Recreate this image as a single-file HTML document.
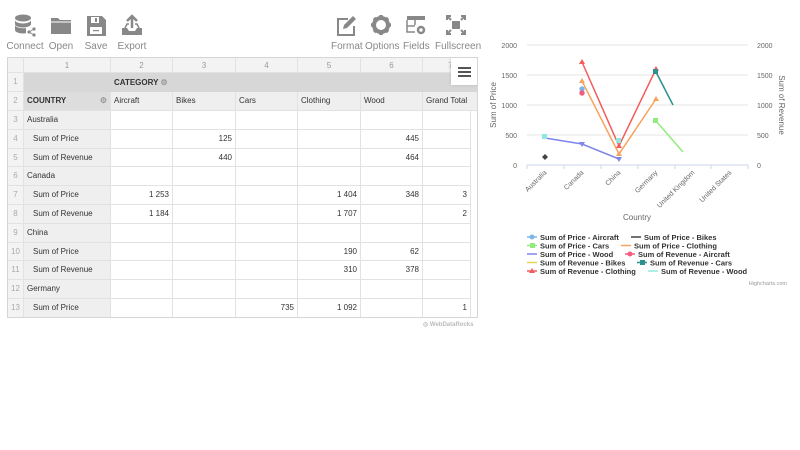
<!DOCTYPE html>
<html><head><meta charset="utf-8"><style>
body{margin:0;width:800px;height:450px;background:#fff;font-family:"Liberation Sans",sans-serif;position:relative;overflow:hidden}
.tb{position:absolute;top:12px;font-size:10px;color:#888;text-align:center;line-height:12px}
.tb svg{display:block;margin:0 auto 3px}
.grid{position:absolute;left:7px;top:57px;width:471px;height:261px;border:1px solid #d5d5d5;box-sizing:border-box;overflow:hidden}
.c{position:absolute;font-size:8px;color:#333;box-sizing:border-box;border-right:1px solid #e2e2e2;border-bottom:1px solid #e2e2e2;line-height:18.8px;white-space:nowrap;overflow:hidden}
.h{background:#f3f3f3;color:#999;text-align:center;line-height:15px}
.rn{background:#f3f3f3;color:#aaa;text-align:center}
.lh{background:#efefef}
.r{text-align:right;padding-right:3px}
</style></head><body>
<div class="tb" style="left:6px;width:38px">
<svg width="24" height="26" viewBox="0 0 24 26"><ellipse cx="10" cy="6" rx="8" ry="3.5" fill="#888"/><path d="M2 8v4c0 2 4 3.5 8 3.5s8-1.5 8-3.5V8c0 2-4 3.5-8 3.5S2 10 2 8zM2 14v4c0 2 4 3.5 8 3.5 1 0 2 0 3-.2V16c-1 .2-2 .3-3 .3-4 0-8-1.5-8-3.5z" fill="#888"/><circle cx="16" cy="20" r="1.6" fill="#888"/><circle cx="21" cy="17" r="1.6" fill="#888"/><circle cx="21" cy="23" r="1.6" fill="#888"/><path d="M16 20l5-3M16 20l5 3" stroke="#888"/></svg>Connect</div>
<div class="tb" style="left:48px;width:26px"><svg width="24" height="26" viewBox="0 0 24 26"><path d="M2 6h7l2 2h11v14H2z" fill="#888"/><path d="M2 10h20" stroke="#fff"/></svg>Open</div>
<div class="tb" style="left:84px;width:24px"><svg width="24" height="26" viewBox="0 0 24 26"><path d="M3 4h15l4 4v16H3z" fill="#888"/><rect x="7" y="5" width="8" height="6" fill="#fff"/><rect x="11" y="6" width="2" height="4" fill="#888"/><rect x="6" y="15" width="12" height="7" fill="#fff"/><rect x="9" y="18" width="6" height="1.2" fill="#888"/></svg>Save</div>
<div class="tb" style="left:117px;width:30px"><svg width="24" height="26" viewBox="0 0 24 26"><path d="M2 16h5l2 3h6l2-3h5v7H2z" fill="#888"/><path d="M12 16V4M7 9l5-5 5 5" stroke="#888" stroke-width="2.5" fill="none"/><path d="M5 16l2-4h2M19 16l-2-4h-2" stroke="#888" stroke-width="1.5" fill="none"/></svg>Export</div>
<div class="tb" style="left:331px;width:29px"><svg width="24" height="26" viewBox="0 0 24 26"><path d="M3 6h11v2H5v14h14v-8h2v10H3z" fill="#888"/><path d="M9 17l1-4 9-9 3 3-9 9z" fill="#888"/></svg>Format</div>
<div class="tb" style="left:365px;width:32px"><svg width="24" height="26" viewBox="0 0 24 26"><circle cx="12" cy="13" r="7" fill="none" stroke="#888" stroke-width="4"/><g stroke="#888" stroke-width="3.5"><path d="M12 3v4M12 19v4M2 13h4M18 13h4M5 6l3 3M16 17l3 3M19 6l-3 3M5 20l3-3"/></g><circle cx="12" cy="13" r="2.5" fill="#fff"/></svg>Options</div>
<div class="tb" style="left:403px;width:26px"><svg width="24" height="26" viewBox="0 0 24 26"><rect x="3" y="4" width="18" height="4" fill="#888"/><path d="M3 8v12h8M3 14h8M11 8v5" stroke="#888" stroke-width="1.5" fill="none"/><circle cx="17" cy="18" r="3" fill="none" stroke="#888" stroke-width="2.5"/></svg>Fields</div>
<div class="tb" style="left:435px;width:42px"><svg width="24" height="26" viewBox="0 0 24 26"><rect x="8" y="9" width="8" height="8" fill="#888"/><g stroke="#888" stroke-width="2" fill="none"><path d="M3 8V4h4M3 4l4 4M21 8V4h-4M21 4l-4 4M3 18v4h4M3 22l4-4M21 18v4h-4M21 22l-4-4"/></g></svg>Fullscreen</div>

<div class="grid">
<div class="c h" style="left:0;top:0;width:16px;height:15px"></div>
<div class="c h" style="left:16px;top:0;width:87px;height:15px">1</div>
<div class="c h" style="left:103px;top:0;width:62px;height:15px">2</div>
<div class="c h" style="left:165px;top:0;width:63px;height:15px">3</div>
<div class="c h" style="left:228px;top:0;width:62px;height:15px">4</div>
<div class="c h" style="left:290px;top:0;width:63px;height:15px">5</div>
<div class="c h" style="left:353px;top:0;width:62px;height:15px">6</div>
<div class="c h" style="left:415px;top:0;width:56px;height:15px">7</div>
<div style="position:absolute;left:443px;top:0;width:27px;height:27px;background:#fff;box-shadow:0 0 3px #bbb;z-index:3"><div style="position:absolute;left:7px;top:9px;width:13px;height:1.5px;background:#555;box-shadow:0 4px 0 #555,0 8px 0 #555"></div></div>
<div class="c rn" style="left:0;top:15px;width:16px;height:19px">1</div>
<div class="c rn" style="left:0;top:34px;width:16px;height:19px">2</div>
<div class="c" style="left:16px;top:15px;width:455px;height:19px;background:#d7d7d7;border:none"></div>
<div class="c" style="left:106px;top:15px;width:200px;height:19px;font-weight:bold;border:none;line-height:19px">CATEGORY <span style="color:#999">⚙</span></div>
<div class="c lh" style="left:16px;top:34px;width:87px;height:19px;background:#ddd;font-weight:bold;padding-left:3px">COUNTRY<span style="position:absolute;right:3px;color:#999">⚙</span></div>
<div class="c lh" style="left:103px;top:34px;width:62px;height:19px;padding-left:3px">Aircraft</div>
<div class="c lh" style="left:165px;top:34px;width:63px;height:19px;padding-left:3px">Bikes</div>
<div class="c lh" style="left:228px;top:34px;width:62px;height:19px;padding-left:3px">Cars</div>
<div class="c lh" style="left:290px;top:34px;width:63px;height:19px;padding-left:3px">Clothing</div>
<div class="c lh" style="left:353px;top:34px;width:62px;height:19px;padding-left:3px">Wood</div>
<div class="c lh" style="left:415px;top:34px;width:56px;height:19px;padding-left:3px">Grand Total</div>
<div id="rows"></div>
</div>
<div style="position:absolute;left:423px;top:321px;font-size:6px;color:#bbb;font-weight:bold">◎ WebDataRocks</div>
<script>
var rows=[["Australia"],["Sum of Price","","125","","","445",""],["Sum of Revenue","","440","","","464",""],["Canada"],["Sum of Price","1 253","","","1 404","348","3"],["Sum of Revenue","1 184","","","1 707","","2"],["China"],["Sum of Price","","","","190","62",""],["Sum of Revenue","","","","310","378",""],["Germany"],["Sum of Price","","","735","1 092","","1"]];
var L=[16,103,165,228,290,353,415],W=[87,62,63,62,63,62,48],h="";
rows.forEach(function(r,i){var t=53+i*18.8;h+='<div class="c rn" style="left:0;top:'+t+'px;width:16px;height:18.8px">'+(i+3)+'</div>';
for(var j=0;j<7;j++){var v=r[j]||"";var cls=j==0?'c lh':'c r';var pad=j==0?(r.length==1?'padding-left:3px;':'padding-left:9px;'):'';
h+='<div class="'+cls+'" style="'+pad+'left:'+L[j]+'px;top:'+t+'px;width:'+W[j]+'px;height:18.8px">'+v+'</div>';}});
document.getElementById('rows').innerHTML=h;
</script>

<svg style="position:absolute;left:0;top:0" width="800" height="450" font-family="Liberation Sans,sans-serif">
<g stroke="#e6e6e6" stroke-width="1"><path d="M527 45H748M527 75H748M527 105H748M527 135H748"/></g>
<path d="M527 165H748" stroke="#ccd6eb"/>
<g stroke="#ccd6eb"><path d="M527 165v4M564 165v4M601 165v4M638 165v4M675 165v4M711 165v4M748 165v4"/></g>
<g font-size="7" fill="#666" text-anchor="end"><text x="517" y="48">2000</text><text x="517" y="108">1000</text><text x="517" y="138">500</text><text x="517" y="168">0</text><text x="517" y="78">1500</text></g>
<g font-size="7" fill="#666"><text x="757" y="48">2000</text><text x="757" y="78">1500</text><text x="757" y="108">1000</text><text x="757" y="138">500</text><text x="757" y="168">0</text></g>
<text font-size="8" fill="#666" transform="translate(496,105) rotate(-90)" text-anchor="middle">Sum of Price</text>
<text font-size="8" fill="#666" transform="translate(779,105) rotate(90)" text-anchor="middle">Sum of Revenue</text>
<g font-size="7" fill="#666" text-anchor="end"><text transform="translate(547,173) rotate(-45)">Australia</text><text transform="translate(584,173) rotate(-45)">Canada</text><text transform="translate(621,173) rotate(-45)">China</text><text transform="translate(658,173) rotate(-45)">Germany</text><text transform="translate(695,173) rotate(-45)">United Kingdom</text><text transform="translate(732,173) rotate(-45)">United States</text></g>
<text x="637" y="220" font-size="8" fill="#666" text-anchor="middle">Country</text>
<polyline points="545,138 582,144 619,159" stroke="#8085e9" stroke-width="1.5" fill="none"/>
<polyline points="582,81 619,154 656,99" stroke="#f7a35c" stroke-width="1.5" fill="none"/>
<polyline points="582,62 619,146 656,69" stroke="#f45b5b" stroke-width="1.5" fill="none"/>
<polyline points="656,72 673,105" stroke="#2b908f" stroke-width="1.5" fill="none"/>
<polyline points="656,121 683,152" stroke="#90ed7d" stroke-width="1.5" fill="none"/>
<rect x="542" y="134" width="5" height="5" fill="#91e8e1"/><rect x="616" y="138" width="5" height="5" fill="#91e8e1"/>
<path d="M545 154l3 3-3 3-3-3z" fill="#434348"/>
<circle cx="582" cy="89" r="2.7" fill="#7cb5ec"/><circle cx="582" cy="93" r="2.7" fill="#f15c80"/>
<rect x="653" y="118" width="5" height="5" fill="#90ed7d"/>
<path d="M582 59l3 5h-6zM619 143l3 5h-6zM656 66l3 5h-6z" fill="#f45b5b"/>
<path d="M582 78l3 5h-6zM619 151l3 5h-6zM656 96l3 5h-6z" fill="#f7a35c"/>
<path d="M579 142h6l-3 5zM616 157h6l-3 5z" fill="#8085e9"/>
<rect x="653" y="69" width="5" height="5" fill="#2b908f"/>
<g font-size="7.5" font-weight="bold" fill="#333">
<g transform="translate(527,237)"><path d="M0 0h10" stroke="#7cb5ec" stroke-width="1.5"/><circle cx="5" cy="0" r="2.5" fill="#7cb5ec"/><text x="13" y="3">Sum of Price - Aircraft</text></g>
<g transform="translate(631,237)"><path d="M0 0h10" stroke="#434348" stroke-width="1.5"/><text x="13" y="3">Sum of Price - Bikes</text></g>
<g transform="translate(527,245.5)"><path d="M0 0h10" stroke="#90ed7d" stroke-width="1.5"/><rect x="3" y="-2.5" width="5" height="5" fill="#90ed7d"/><text x="13" y="3">Sum of Price - Cars</text></g>
<g transform="translate(621,245.5)"><path d="M0 0h10" stroke="#f7a35c" stroke-width="1.5"/><text x="13" y="3">Sum of Price - Clothing</text></g>
<g transform="translate(527,254)"><path d="M0 0h10" stroke="#8085e9" stroke-width="1.5"/><text x="13" y="3">Sum of Price - Wood</text></g>
<g transform="translate(625,254)"><path d="M0 0h10" stroke="#f15c80" stroke-width="1.5"/><circle cx="5" cy="0" r="2.5" fill="#f15c80"/><text x="13" y="3">Sum of Revenue - Aircraft</text></g>
<g transform="translate(527,262.5)"><path d="M0 0h10" stroke="#e4d354" stroke-width="1.5"/><text x="13" y="3">Sum of Revenue - Bikes</text></g>
<g transform="translate(637,262.5)"><path d="M0 0h10" stroke="#2b908f" stroke-width="1.5"/><rect x="3" y="-2.5" width="5" height="5" fill="#2b908f"/><text x="13" y="3">Sum of Revenue - Cars</text></g>
<g transform="translate(527,271)"><path d="M0 0h10" stroke="#f45b5b" stroke-width="1.5"/><path d="M5 -3l3 5h-6z" fill="#f45b5b"/><text x="13" y="3">Sum of Revenue - Clothing</text></g>
<g transform="translate(648,271)"><path d="M0 0h10" stroke="#91e8e1" stroke-width="1.5"/><text x="13" y="3">Sum of Revenue - Wood</text></g>
</g>
<text x="787" y="285" font-size="5.5" fill="#999" text-anchor="end">Highcharts.com</text>
</svg>
</body></html>
